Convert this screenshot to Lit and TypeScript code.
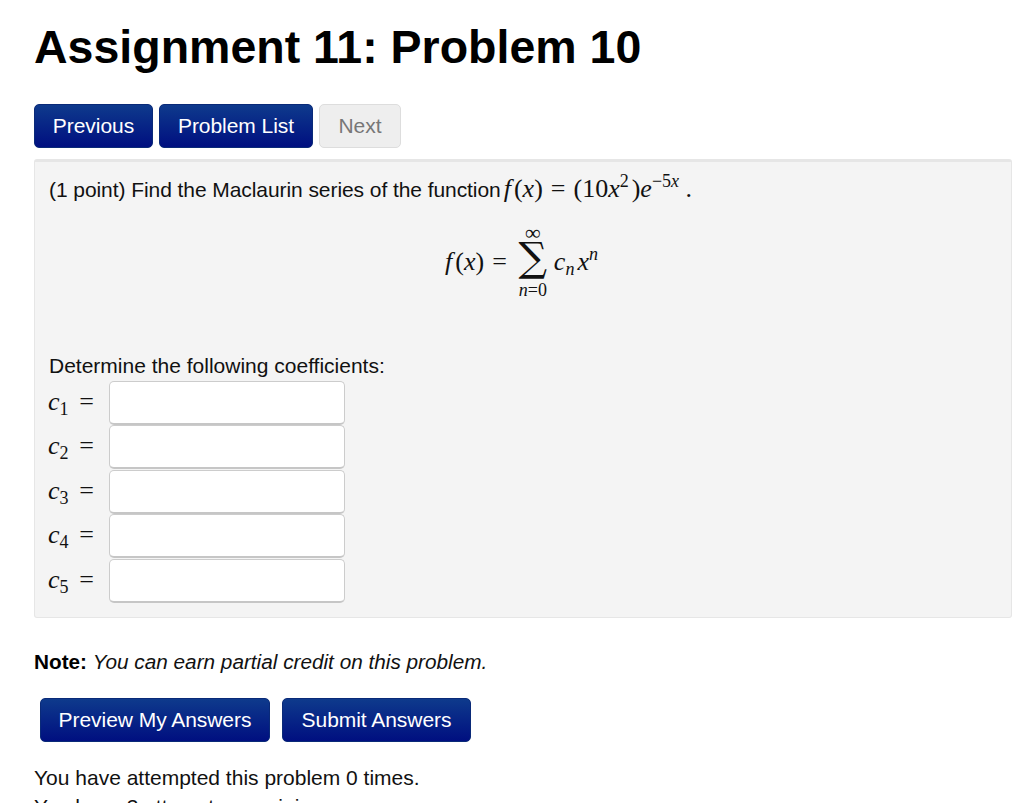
import { LitElement, html, css } from "lit";
import { customElement } from "lit/decorators.js";

@customElement("app-root")
export class AppRoot extends LitElement {
  static styles = css`
    :host {
      display: block;
      height: 803px;
      overflow: hidden;
      box-sizing: border-box;
      padding: 0 12px 0 34px;
      font-family: "Liberation Sans", Arial, sans-serif;
      font-size: 21px;
      color: #111;
    }
    h1 {
      margin: 0;
      padding-top: 20px;
      font-size: 46.5px;
      line-height: 54px;
      font-weight: 700;
      color: #000;
      height: 84px;
    }
    .nav { display: flex; gap: 6px; height: 44px; margin-bottom: 11px; }
    .btn {
      box-sizing: border-box;
      display: flex; align-items: center; justify-content: center;
      height: 44px;
      border-radius: 5px;
      border: 1px solid #0a2a78;
      background: linear-gradient(#0e3a8c, #000f80);
      color: #fff;
      font-size: 21px;
      letter-spacing: -0.05px;
    }
    .btn.off { background: #eee; border-color: #ddd; color: #777; }
    .w-prev { width: 119px; }
    .w-list { width: 154px; }
    .w-next { width: 82px; }
    .w-preview { width: 230px; }
    .w-submit { width: 189px; }
    .panel {
      box-sizing: border-box;
      height: 459px;
      background: #f4f4f4;
      border: 1px solid #e6e6e6;
      border-top-width: 3px;
      border-radius: 3px;
      padding: 0 14px;
    }
    .stmt { display: flex; align-items: baseline; height: 28px; margin-top: 13px; line-height: 28px; }
    .lead { letter-spacing: -0.07px; white-space: nowrap; }
    .m { font-family: "Liberation Serif", "Times New Roman", serif; font-size: 26px; color: #111; white-space: nowrap; }
    .m i { font-style: italic; }
    .m sup { font-size: 18px; line-height: 0; vertical-align: 10px; }
    .m sub { font-size: 18px; line-height: 0; vertical-align: -5px; }
    .stmt .m { margin-left: 3px; }
    .f { margin-right: 3px; }
    .eq { margin: 0 8px; }
    .p { margin-right: 3px; }
    .gap { margin-right: 3px; }
    .display {
      display: flex; justify-content: center; align-items: center;
      height: 78px; margin-top: 20px; padding-right: 3px;
    }
    .sum { display: flex; flex-direction: column; align-items: center; margin: 0 3px 0 0; width: 36px; }
    .lim { font-family: "Liberation Serif", serif; font-size: 18px; line-height: 16px; white-space: nowrap; }
    .inf { font-size: 22px; line-height: 14px; }
    .sigma { font-family: "DejaVu Serif", "Liberation Serif", serif; font-size: 40px; line-height: 38px; height: 38px; margin: -2px 0 6px; }
    .det { margin-top: 51px; line-height: 28px; height: 28px; }
    .rows { display: flex; flex-direction: column; gap: 1px; margin-top: 1px; }
    .row { display: flex; align-items: center; height: 43.5px; }
    .lab { width: 60px; display: flex; justify-content: space-between; padding: 0 14px 2px 0; margin-left: -1px; box-sizing: border-box; }
    input {
      box-sizing: border-box;
      width: 236px; height: 44px;
      margin-left: 1px;
      border: 1px solid #ccc;
      border-bottom: 2px solid #c6c6c6;
      border-radius: 5px;
      background: #fff;
      outline: none;
      padding: 0;
    }
    .note { margin-top: 30px; line-height: 28px; height: 28px; color: #111; font-size: 20.75px; }
    .note b { color: #000; }
    .actions { display: flex; gap: 12px; margin: 22px 0 0 6px; }
    .foot { margin-top: 21px; line-height: 29px; }
  `;

  render() {
    const cs = [1, 2, 3, 4, 5];
    return html`
      <h1>Assignment 11: Problem 10</h1>
      <div class="nav">
        <div class="btn w-prev">Previous</div>
        <div class="btn w-list">Problem List</div>
        <div class="btn off w-next">Next</div>
      </div>
      <div class="panel">
        <div class="stmt">
          <span class="lead">(1 point) Find the Maclaurin series of the function</span>
          <span class="m"><i class="f">f</i>(<i>x</i>)<span class="eq">=</span>(10<i>x</i><sup>2</sup><span class="p"></span>)<i>e</i><sup>−5<i>x</i></sup> .</span>
        </div>
        <div class="display">
          <span class="m"><i class="f">f</i>(<i>x</i>)<span class="eq">=</span></span>
          <div class="sum">
            <span class="lim inf">∞</span>
            <span class="sigma">∑</span>
            <span class="lim"><i>n</i>=0</span>
          </div>
          <span class="m"><i>c</i><sub class="gap"><i>n</i></sub><i>x</i><sup><i>n</i></sup></span>
        </div>
        <div class="det">Determine the following coefficients:</div>
        <div class="rows">
          ${cs.map(
            (n) => html`<div class="row">
              <span class="lab m"><span><i>c</i><sub>${n}</sub></span><span>=</span></span>
              <input type="text" />
            </div>`
          )}
        </div>
      </div>
      <div class="note"><b>Note:</b> <i>You can earn partial credit on this problem.</i></div>
      <div class="actions">
        <div class="btn w-preview">Preview My Answers</div>
        <div class="btn w-submit">Submit Answers</div>
      </div>
      <div class="foot">
        You have attempted this problem 0 times.<br />
        You have 3 attempts remaining.
      </div>
    `;
  }
}
